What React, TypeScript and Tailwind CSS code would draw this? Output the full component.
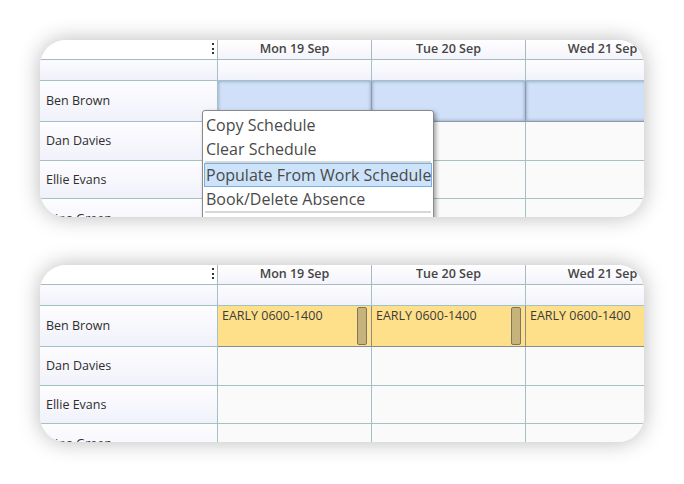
import React from "react";

const DAYS = ["Mon 19 Sep", "Tue 20 Sep", "Wed 21 Sep"];
const NAMES = [
  { name: "Ben Brown", h: "h-[41px]" },
  { name: "Dan Davies", h: "h-[39px]" },
  { name: "Ellie Evans", h: "h-[38px]" },
  { name: "Gina Green", h: "h-[40px]" },
];

function Kebab() {
  return (
    <div className="absolute right-[3px] top-[3px] flex flex-col gap-[2.5px]">
      <span className="block w-[2px] h-[2px] bg-[#333]" />
      <span className="block w-[2px] h-[2px] bg-[#333]" />
      <span className="block w-[2px] h-[2px] bg-[#333]" />
    </div>
  );
}

function Header() {
  return (
    <>
      <div className="flex h-[20px] shrink-0">
        <div className="relative w-[178px] shrink-0 bg-white border-b border-r border-[#a8b9c1]">
          <Kebab />
        </div>
        {DAYS.map((d) => (
          <div
            key={d}
            className="w-[154px] shrink-0 flex items-center justify-center bg-gradient-to-b from-white to-[#f3f3fc] border-b border-r border-[#a8b9c1] text-[12.5px] font-semibold text-[#444]"
          >
            {d}
          </div>
        ))}
      </div>
      <div className="flex h-[21px] shrink-0">
        <div className="w-[178px] shrink-0 bg-gradient-to-b from-[#fbfbff] to-[#f1f1fb] border-b border-r border-[#a3c2c3]" />
        {DAYS.map((d) => (
          <div
            key={d}
            className="w-[154px] shrink-0 bg-gradient-to-b from-[#fdfdff] to-[#f2f2fb] border-b border-r border-[#a3c2c3]"
          />
        ))}
      </div>
    </>
  );
}

function NameCell({ name, h }: { name: string; h: string }) {
  return (
    <div
      className={`w-[178px] shrink-0 ${h} flex items-center pl-[6px] pt-[1px] bg-gradient-to-b from-[#fdfdff] to-[#f1f1fb] border-b border-r border-[#a3c2c3] text-[12.5px] text-[#2e2e2e]`}
    >
      {name}
    </div>
  );
}

function Menu() {
  return (
    <div className="absolute left-[162px] top-[70px] w-[232px] bg-white border border-[#8a8a8a] rounded-[3px] shadow-[2px_2px_4px_rgba(0,0,0,0.35)] px-[1px] pt-[2px] text-[16px] whitespace-nowrap text-[#4a4a4a] leading-[24px]">
      <div className="h-[24px] border border-transparent pl-[1px] leading-[22px]">Copy Schedule</div>
      <div className="h-[24px] border border-transparent pl-[1px] leading-[22px]">Clear Schedule</div>
      <div className="h-[2px] mx-[1px] bg-[#d8d8d8]" />
      <div className="h-[24px] border border-[#7aaee0] bg-[#cce3fa] pl-[1px] leading-[22px] overflow-hidden">Populate From Work Schedule</div>
      <div className="h-[24px] border border-transparent pl-[1px] leading-[22px]">Book/Delete Absence</div>
      <div className="h-[2px] mx-[1px] bg-[#d8d8d8]" />
      <div className="h-[24px]" />
    </div>
  );
}

function Card({ variant }: { variant: "select" | "shift" }) {
  return (
    <div className="relative w-[604px] h-[177px] shrink-0 overflow-hidden rounded-[26px] bg-[#fafafa] shadow-[0_0_22px_rgba(0,0,0,0.28)]">
      <div className="flex flex-col w-[640px]">
        <Header />
        {NAMES.map((n, i) => (
          <div key={n.name} className="flex shrink-0">
            <NameCell name={n.name} h={n.h} />
            {DAYS.map((d) => {
              if (i === 0 && variant === "select") {
                return (
                  <div
                    key={d}
                    className={`w-[154px] shrink-0 ${n.h} bg-[#d0e0f8] border-b border-r border-[#8f9aa6] shadow-[inset_0_0_3px_1px_rgba(120,140,175,0.55)]`}
                  />
                );
              }
              if (i === 0 && variant === "shift") {
                return (
                  <div
                    key={d}
                    className={`relative w-[154px] shrink-0 ${n.h} bg-[#fee08a] border-b border-r border-[#8c8c8c] pl-[4px] pt-[1px] text-[12.5px] leading-[17px] text-[#3c3c3c]`}
                  >
                    EARLY 0600-1400
                    <div className="absolute right-[4px] top-[1px] w-[10px] h-[38px] rounded-[2px] bg-[#c6b37c] border border-[#7e7662]" />
                  </div>
                );
              }
              return (
                <div
                  key={d}
                  className={`w-[154px] shrink-0 ${n.h} bg-[#fafafa] border-b border-r border-[#a3c2c3]`}
                />
              );
            })}
          </div>
        ))}
      </div>
      {variant === "select" && <Menu />}
    </div>
  );
}

export default function App() {
  return (
    <div
      className="w-[684px] h-[484px] bg-white flex flex-col pt-[40px] pl-[40px] gap-[48px] overflow-hidden"
      style={{ fontFamily: '"Open Sans", "Noto Sans", sans-serif' }}
    >
      <Card variant="select" />
      <Card variant="shift" />
    </div>
  );
}
